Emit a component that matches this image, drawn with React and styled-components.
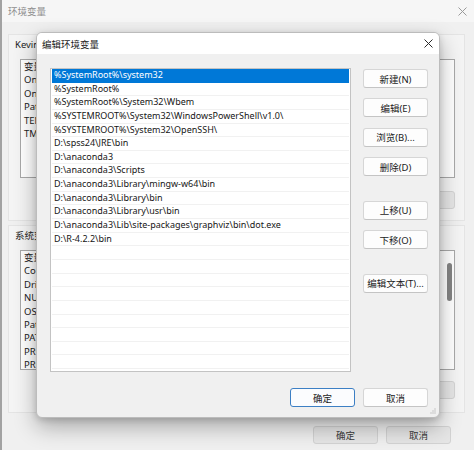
import styled, { createGlobalStyle } from "styled-components";

const GlobalStyle = createGlobalStyle`
  html, body {
    margin: 0;
    padding: 0;
    background: #ffffff;
  }
  body {
    font-family: "Noto Sans", "Noto Sans CJK SC", sans-serif;
    font-size: 9.5px;
    color: #1a1a1a;
  }
`;

const PATHS = [
  String.raw`%SystemRoot%\system32`,
  String.raw`%SystemRoot%`,
  String.raw`%SystemRoot%\System32\Wbem`,
  String.raw`%SYSTEMROOT%\System32\WindowsPowerShell\v1.0\ `.trim(),
  String.raw`%SYSTEMROOT%\System32\OpenSSH\ `.trim(),
  String.raw`D:\spss24\JRE\bin`,
  String.raw`D:\anaconda3`,
  String.raw`D:\anaconda3\Scripts`,
  String.raw`D:\anaconda3\Library\mingw-w64\bin`,
  String.raw`D:\anaconda3\Library\bin`,
  String.raw`D:\anaconda3\Library\usr\bin`,
  String.raw`D:\anaconda3\Lib\site-packages\graphviz\bin\dot.exe`,
  String.raw`D:\R-4.2.2\bin`,
];

const USER_VARS = [
  ["变量", "值"],
  ["OneDrive", "C:\\Users\\Kevin\\OneDrive"],
  ["OneDriveConsumer", "C:\\Users\\Kevin\\OneDrive"],
  ["Path", "C:\\Users\\Kevin\\AppData\\Local\\Microsoft\\WindowsApps"],
  ["TEMP", "C:\\Users\\Kevin\\AppData\\Local\\Temp"],
  ["TMP", "C:\\Users\\Kevin\\AppData\\Local\\Temp"],
];

const SYSTEM_VARS = [
  ["变量", "值"],
  ["ComSpec", "C:\\Windows\\system32\\cmd.exe"],
  ["DriverData", "C:\\Windows\\System32\\Drivers\\DriverData"],
  ["NUMBER_OF_PROCESSORS", "8"],
  ["OS", "Windows_NT"],
  ["Path", "C:\\Windows\\system32;C:\\Windows"],
  ["PATHEXT", ".COM;.EXE;.BAT;.CMD;.VBS"],
  ["PROCESSOR_ARCHITECTURE", "AMD64"],
  ["PROCESSOR_IDENTIFIER", "Intel64 Family 6"],
];

/* ---------- background window: 环境变量 ---------- */

const Desktop = styled.div`
  position: relative;
  width: 474px;
  height: 453px;
  overflow: hidden;
  background: #ffffff;
`;

const BackWindow = styled.div`
  width: 474px;
  height: 450px;
  box-sizing: border-box;
  border-left: 2px solid #a2a2a2;
  background: #f0f0f0;
  display: flex;
  flex-direction: column;
`;

const BackTitle = styled.div`
  height: 22px;
  flex-shrink: 0;
  display: flex;
  align-items: center;
  justify-content: space-between;
  padding: 0 7px 0 6px;
  background: #f6f6f6;
  color: #8e8e8e;
`;

const BackBody = styled.div`
  flex: 1;
  display: flex;
  flex-direction: column;
  padding: 12px 9px 0 6px;
`;

const Group = styled.div`
  margin-top: ${({ $mt }) => $mt}px;
  padding: 2px 9px ${({ $pb }) => $pb}px 11px;
  border: 1px solid #e4e4e4;
  background: #f4f4f4;
`;

const GroupLabel = styled.div`
  margin-left: -5px;
  line-height: 15px;
  color: #1f1f1f;
`;

const BackList = styled.div`
  margin-top: 7px;
  height: ${({ $h }) => $h}px;
  box-sizing: border-box;
  border: 1px solid #a8a8a8;
  background: #ffffff;
  display: flex;
  overflow: hidden;
`;

const BackRows = styled.div`
  flex: 1;
  min-width: 0;
`;

const BackRow = styled.div`
  height: 13.4px;
  line-height: 13.4px;
  padding-left: 3px;
  display: grid;
  grid-template-columns: 150px 1fr;
  white-space: nowrap;
  overflow: hidden;
  color: #222;
`;

const ScrollTrack = styled.div`
  width: 8px;
  flex-shrink: 0;
  padding-top: 12px;
`;

const ScrollThumb = styled.div`
  width: 5px;
  height: 38px;
  margin-left: 1px;
  border-radius: 3px;
  background: #848484;
`;

const BackButtons = styled.div`
  margin-top: ${({ $mt }) => $mt}px;
  display: flex;
  justify-content: flex-end;
  gap: 7px;
`;

const BackFooter = styled.div`
  margin-top: 13px;
  padding-right: 14px;
  display: flex;
  justify-content: flex-end;
  gap: 8px;
`;

const BackButton = styled.div`
  width: 65px;
  height: 18px;
  box-sizing: border-box;
  display: flex;
  align-items: center;
  justify-content: center;
  border: 1px solid #d3d3d3;
  border-radius: 3px;
  background: #e6e6e6;
  color: #3a3a3a;
`;

/* ---------- foreground dialog: 编辑环境变量 ---------- */

const Dialog = styled.div`
  position: absolute;
  left: 36px;
  top: 32px;
  width: 404px;
  height: 386px;
  box-sizing: border-box;
  border: 1px solid #bcbcbc;
  border-radius: 6px;
  background: #f0f0f0;
  overflow: hidden;
  display: flex;
  flex-direction: column;
  box-shadow: 0 9px 22px rgba(0, 0, 0, 0.3), 0 2px 6px rgba(0, 0, 0, 0.14);
`;

const DialogTitle = styled.div`
  height: 21px;
  flex-shrink: 0;
  display: flex;
  align-items: center;
  justify-content: space-between;
  padding: 0 6px 0 5px;
  background: #ffffff;
  color: #1a1a1a;
`;

const DialogBody = styled.div`
  flex: 1;
  display: flex;
  flex-direction: column;
  padding: 14px 11px 10px 13px;
`;

const MainRow = styled.div`
  height: 304px;
  display: flex;
  gap: 12px;
`;

const PathList = styled.div`
  flex: 1;
  box-sizing: border-box;
  border: 1px solid #c3c3c3;
  background: #ffffff;
  padding: 0 1px;
  overflow: hidden;
`;

const PathRow = styled.div`
  height: 13.65px;
  box-sizing: border-box;
  line-height: 12.65px;
  padding-left: 2px;
  font-size: 9px;
  border-bottom: 1px solid ${({ $selected }) => ($selected ? "#0078d7" : "#f1f1f1")};
  white-space: nowrap;
  overflow: hidden;
  background: ${({ $selected }) => ($selected ? "#0078d7" : "transparent")};
  color: ${({ $selected }) => ($selected ? "#ffffff" : "#161616")};
`;

const ButtonColumn = styled.div`
  width: 65px;
  flex-shrink: 0;
  padding-top: 1px;
  display: flex;
  flex-direction: column;
  gap: 10.4px;
`;

const DlgButton = styled.div`
  width: 65px;
  height: 19px;
  flex-shrink: 0;
  margin-top: ${({ $extra }) => $extra || 0}px;
  box-sizing: border-box;
  display: flex;
  align-items: center;
  justify-content: center;
  border: 1px solid ${({ $focused }) => ($focused ? "#3c7fc4" : "#d6d6d6")};
  border-bottom-color: ${({ $focused }) => ($focused ? "#3c7fc4" : "#c4c4c4")};
  border-radius: 3px;
  background: ${({ $focused }) => ($focused ? "#fbfcfe" : "#fdfdfd")};
  color: #1b1b1b;
`;

const DialogFooter = styled.div`
  margin-top: 16px;
  display: flex;
  justify-content: flex-end;
  gap: 8px;
`;

const Grip = styled.svg`
  position: absolute;
  right: 2px;
  bottom: 2px;
`;

function CloseIcon({ color }) {
  return (
    <svg width="9" height="9" viewBox="0 0 9 9">
      <path d="M0.5 0.5 L8.5 8.5 M8.5 0.5 L0.5 8.5" stroke={color} strokeWidth="1" />
    </svg>
  );
}

function ResizeGrip() {
  const dots = [
    [6, 2],
    [6, 4],
    [4, 4],
    [6, 6],
    [4, 6],
    [2, 6],
  ];
  return (
    <Grip width="8" height="8" viewBox="0 0 8 8">
      {dots.map(([x, y]) => (
        <rect key={`${x}-${y}`} x={x - 0.5} y={y - 0.5} width="1" height="1" fill="#a0a0a0" />
      ))}
    </Grip>
  );
}

function VarList({ rows, height, scroll }) {
  return (
    <BackList $h={height}>
      <BackRows>
        {rows.map(([name, value], i) => (
          <BackRow key={i}>
            <span>{name}</span>
            <span>{value}</span>
          </BackRow>
        ))}
      </BackRows>
      {scroll && (
        <ScrollTrack>
          <ScrollThumb />
        </ScrollTrack>
      )}
    </BackList>
  );
}

export default function App() {
  const rows = [...PATHS, ...Array(10).fill("")];

  return (
    <Desktop>
      <GlobalStyle />
      <BackWindow>
        <BackTitle>
          <span>环境变量</span>
          <CloseIcon color="#9a9a9a" />
        </BackTitle>
        <BackBody>
          <Group $mt={0} $pb={11}>
            <GroupLabel>Kevin 的用户变量(U)</GroupLabel>
            <VarList rows={USER_VARS} height={119} />
            <BackButtons $mt={13}>
              <BackButton>新建(N)...</BackButton>
              <BackButton>编辑(E)...</BackButton>
              <BackButton>删除(D)</BackButton>
            </BackButtons>
          </Group>
          <Group $mt={4} $pb={13}>
            <GroupLabel>系统变量(S)</GroupLabel>
            <VarList rows={SYSTEM_VARS} height={120} scroll />
            <BackButtons $mt={11}>
              <BackButton>新建(W)...</BackButton>
              <BackButton>编辑(I)...</BackButton>
              <BackButton>删除(L)</BackButton>
            </BackButtons>
          </Group>
          <BackFooter>
            <BackButton>确定</BackButton>
            <BackButton>取消</BackButton>
          </BackFooter>
        </BackBody>
      </BackWindow>

      <Dialog>
        <DialogTitle>
          <span>编辑环境变量</span>
          <CloseIcon color="#2a2a2a" />
        </DialogTitle>
        <DialogBody>
          <MainRow>
            <PathList>
              {rows.map((p, i) => (
                <PathRow key={i} $selected={i === 0}>
                  {p}
                </PathRow>
              ))}
            </PathList>
            <ButtonColumn>
              <DlgButton>新建(N)</DlgButton>
              <DlgButton>编辑(E)</DlgButton>
              <DlgButton>浏览(B)...</DlgButton>
              <DlgButton>删除(D)</DlgButton>
              <DlgButton $extra={14.3}>上移(U)</DlgButton>
              <DlgButton>下移(O)</DlgButton>
              <DlgButton $extra={14.2}>编辑文本(T)...</DlgButton>
            </ButtonColumn>
          </MainRow>
          <DialogFooter>
            <DlgButton $focused>确定</DlgButton>
            <DlgButton>取消</DlgButton>
          </DialogFooter>
        </DialogBody>
        <ResizeGrip />
      </Dialog>
    </Desktop>
  );
}
